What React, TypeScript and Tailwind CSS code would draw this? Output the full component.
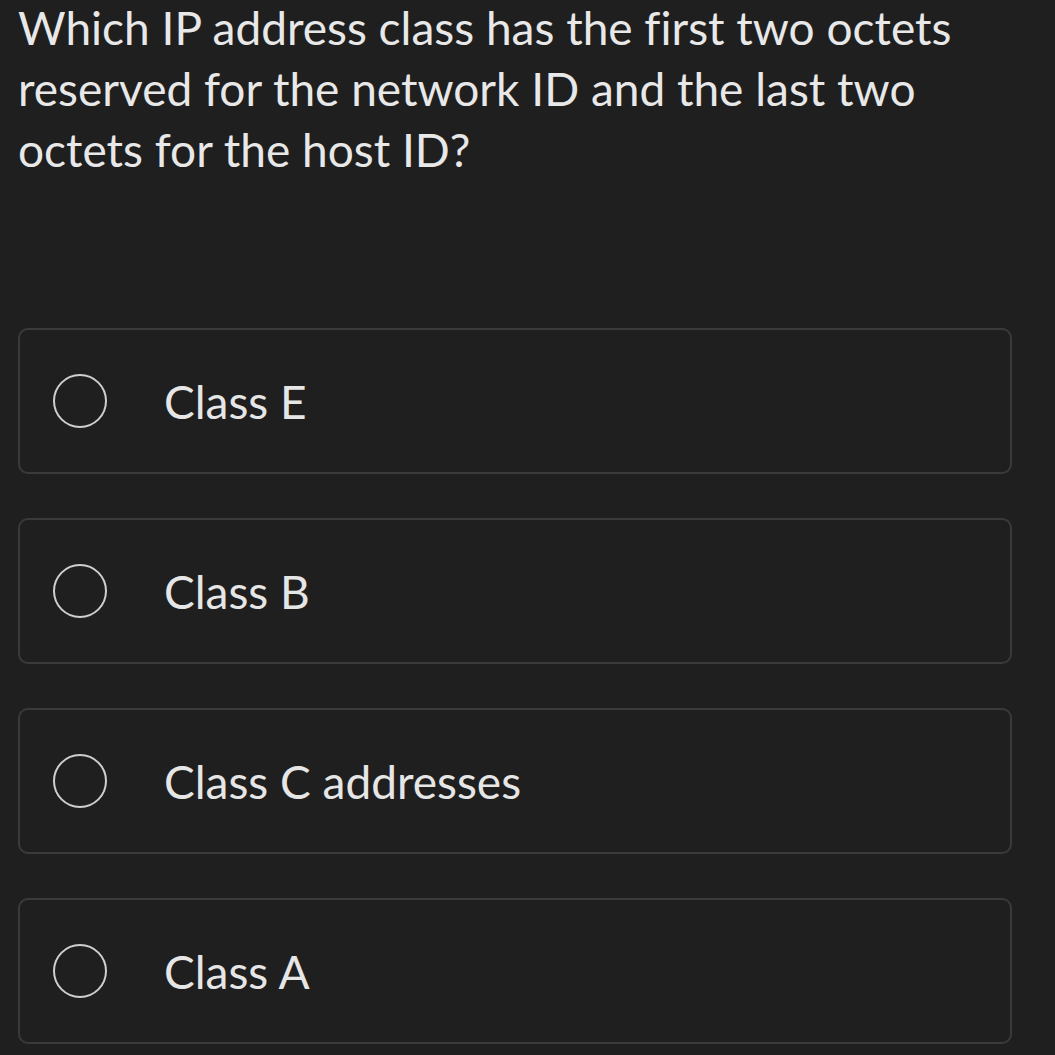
import React from 'react';

const OPTIONS = ['Class E', 'Class B', 'Class C addresses', 'Class A'];

export default function App() {
  return (
    <div
      className="w-[1055px] h-[1055px] overflow-hidden bg-[#1f1f1f] text-[#e8e8e8] [font-variant-ligatures:none]"
      style={{ fontFamily: 'Lato, "Noto Sans", sans-serif' }}
    >
      <div className="pl-[18px] pr-[40px] -mt-[3px]">
        <p className="text-[46px] leading-[61px]">
          Which IP address class has the first two octets reserved for the network ID and the last two octets for the host ID?
        </p>
      </div>

      <div className="mt-[148px] ml-[18px] w-[994px] flex flex-col gap-[44px]">
        {OPTIONS.map(opt => (
          <div
            key={opt}
            className="h-[146px] flex items-center border-2 border-[#3a3a3a] rounded-[10px] pl-[33px]"
          >
            <span className="w-[54px] h-[54px] rounded-full border-2 border-[#cfcfcf] shrink-0"></span>
            <span className="ml-[57px] text-[46px] text-[#e6e6e6]">{opt}</span>
          </div>
        ))}
      </div>
    </div>
  );
}
